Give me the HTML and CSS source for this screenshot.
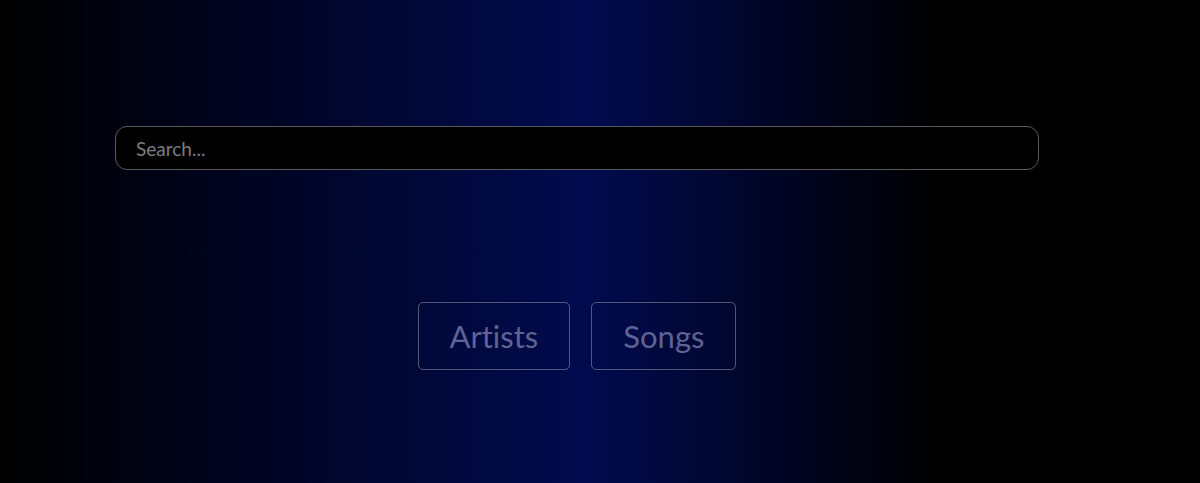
FILE: index.html
```html
<!DOCTYPE html>
<html>
<head>
<meta charset="utf-8">
<link rel="stylesheet" href="styles.css">
</head>
<body>
<main class="page">
  <div class="container">
    <input class="search" type="text" placeholder="Search...">
    <div class="tabs">
      <button class="tab">Artists</button>
      <button class="tab">Songs</button>
    </div>
  </div>
</main>
</body>
</html>
```
FILE: styles.css
```css
html, body {
  margin: 0;
  height: 100%;
}
body {
  background: linear-gradient(to right, #000 0%, #000b4e 49%, #000 78.5%, #000 100%);
  font-family: Lato, "Liberation Sans", sans-serif;
  font-variant-ligatures: none;
}
.page {
  height: 483px;
  overflow: hidden;
}
.container {
  width: 924px;
  margin-left: 115px;
  padding-top: 126px;
  display: flex;
  flex-direction: column;
}
.search {
  box-sizing: border-box;
  width: 924px;
  height: 44px;
  background: #000;
  border: 1px solid #5a5a5a;
  border-radius: 12px;
  padding: 0 20px;
  font-family: Lato, "Liberation Sans", sans-serif;
  font-size: 19px;
  color: #ccc;
  outline: none;
}
.search::placeholder {
  color: #7e7e7e;
}
.tabs {
  display: flex;
  justify-content: center;
  gap: 21px;
  margin-top: 132px;
}
.tab {
  box-sizing: border-box;
  height: 68px;
  padding: 0 31px;
  background: transparent;
  border: 1px solid rgba(150, 150, 175, 0.55);
  border-radius: 5px;
  font-family: Lato, "Liberation Sans", sans-serif;
  font-variant-ligatures: none;
  font-size: 31px;
  color: #5e6394;
  cursor: pointer;
}
```
